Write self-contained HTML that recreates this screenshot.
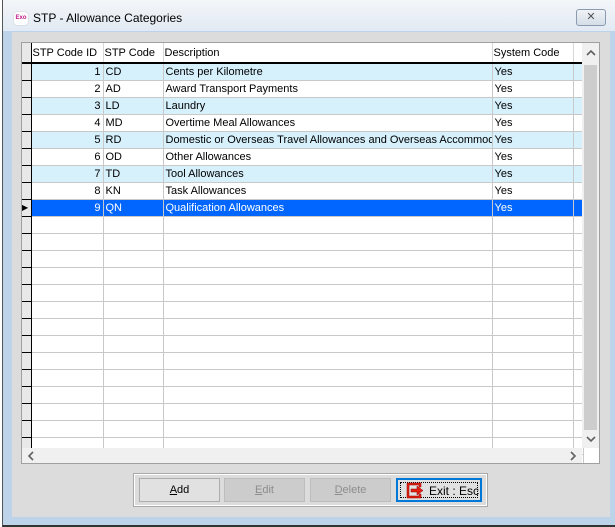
<!DOCTYPE html>
<html><head><style>
*{margin:0;padding:0;box-sizing:border-box}
body{width:615px;height:527px;overflow:hidden;background:#fff;font-family:"Liberation Sans",Arial,sans-serif;font-size:11px;position:relative}
.abs{position:absolute}
.win{left:2px;top:0;width:613px;height:527px;border-left:1px solid #555;border-bottom:2px solid #333;background:linear-gradient(#f4f6f9,#dfe8f2 35px);}
.frame{left:3px;top:31px;width:612px;height:494px;background:#bcd3ea}
.client{left:12px;top:32px;width:598px;height:485px;background:#dcdcdc}
.grid{left:21px;top:42px;width:579px;height:422px;background:#fff;border:1px solid #a0a0a0;overflow:hidden}
table{border-collapse:collapse;position:absolute;left:0;top:0;table-layout:fixed}
td{height:17px;border-right:1px solid #c8c8c8;border-bottom:1px solid #c8c8c8;padding:0 2px;white-space:nowrap;overflow:hidden;font-size:11px}
tr.h td{height:20px;border-bottom:2px solid #000;border-right:1px solid #d8d8d8;padding:0 1px}
tr.b td{background:#d6f0fc}
tr.s td{background:#0066ff;color:#fff}
tr td.ind{background:#e8e8e8;border-right:1px solid #000;border-bottom:1px solid #000;padding:0}
.r{text-align:right}
.btn{top:478px;height:24px;border:1px solid #adadad;background:#e1e1e1;text-align:center;line-height:22px;font-size:11px;white-space:nowrap}
.dis{background:#cccccc;border-color:#bdbdbd;color:#8d8d8d}
</style></head><body>
<div class="abs win"></div>
<div class="abs frame"></div>
<div class="abs client"></div>
<div class="abs" style="left:14px;top:12px;width:14px;height:13px;background:#fff;border-radius:3px;font-size:6px;color:#c0188a;font-weight:bold;line-height:13px;text-align:center;box-shadow:0 0 1px #999">Exo</div>
<div class="abs" style="left:33px;top:11px;font-size:12px;color:#000">STP - Allowance Categories</div>
<div class="abs" style="left:576px;top:9px;width:30px;height:17px;border:1px solid #8a9bb0;border-radius:3px;background:linear-gradient(#f0f3f7,#d4dde8);text-align:center;font-size:11px;line-height:15px;color:#555">✕</div>
<div class="abs grid">
<table style="width:561px">
<colgroup><col style="width:9px"><col style="width:72px"><col style="width:60px"><col style="width:329px"><col style="width:81px"><col style="width:10px"></colgroup>
<tr class="h"><td class="ind" style="border-bottom:2px solid #000"></td><td>STP Code ID</td><td>STP Code</td><td>Description</td><td>System Code</td><td></td></tr>
<tr class="b"><td class="ind"></td><td class="r">1</td><td>CD</td><td>Cents per Kilometre</td><td>Yes</td><td></td></tr>
<tr><td class="ind"></td><td class="r">2</td><td>AD</td><td>Award Transport Payments</td><td>Yes</td><td></td></tr>
<tr class="b"><td class="ind"></td><td class="r">3</td><td>LD</td><td>Laundry</td><td>Yes</td><td></td></tr>
<tr><td class="ind"></td><td class="r">4</td><td>MD</td><td>Overtime Meal Allowances</td><td>Yes</td><td></td></tr>
<tr class="b"><td class="ind"></td><td class="r">5</td><td>RD</td><td>Domestic or Overseas Travel Allowances and Overseas Accommodation</td><td>Yes</td><td></td></tr>
<tr><td class="ind"></td><td class="r">6</td><td>OD</td><td>Other Allowances</td><td>Yes</td><td></td></tr>
<tr class="b"><td class="ind"></td><td class="r">7</td><td>TD</td><td>Tool Allowances</td><td>Yes</td><td></td></tr>
<tr><td class="ind"></td><td class="r">8</td><td>KN</td><td>Task Allowances</td><td>Yes</td><td></td></tr>
<tr class="s"><td class="ind" style="font-size:8px;line-height:8px;color:#000">&#9654;</td><td class="r">9</td><td>QN</td><td>Qualification Allowances</td><td>Yes</td><td></td></tr>
<tr><td class="ind"></td><td></td><td></td><td></td><td></td><td></td></tr>
<tr><td class="ind"></td><td></td><td></td><td></td><td></td><td></td></tr>
<tr><td class="ind"></td><td></td><td></td><td></td><td></td><td></td></tr>
<tr><td class="ind"></td><td></td><td></td><td></td><td></td><td></td></tr>
<tr><td class="ind"></td><td></td><td></td><td></td><td></td><td></td></tr>
<tr><td class="ind"></td><td></td><td></td><td></td><td></td><td></td></tr>
<tr><td class="ind"></td><td></td><td></td><td></td><td></td><td></td></tr>
<tr><td class="ind"></td><td></td><td></td><td></td><td></td><td></td></tr>
<tr><td class="ind"></td><td></td><td></td><td></td><td></td><td></td></tr>
<tr><td class="ind"></td><td></td><td></td><td></td><td></td><td></td></tr>
<tr><td class="ind"></td><td></td><td></td><td></td><td></td><td></td></tr>
<tr><td class="ind"></td><td></td><td></td><td></td><td></td><td></td></tr>
<tr><td class="ind"></td><td></td><td></td><td></td><td></td><td></td></tr>
<tr><td class="ind"></td><td></td><td></td><td></td><td></td><td></td></tr>
<tr><td class="ind"></td><td></td><td></td><td></td><td></td><td></td></tr>
<tr><td class="ind"></td><td></td><td></td><td></td><td></td><td></td></tr>
<tr><td class="ind"></td><td></td><td></td><td></td><td></td><td></td></tr>
<tr><td class="ind"></td><td></td><td></td><td></td><td></td><td></td></tr>
</table>
<div class="abs" style="left:560px;top:0;width:17px;height:405px;background:#f0f0f0"></div>
<div class="abs" style="left:562px;top:22px;width:13px;height:365px;background:#cdcdcd"></div>
<svg class="abs" style="left:564px;top:6px" width="10" height="8"><path d="M1 6L5 2L9 6" fill="none" stroke="#606060" stroke-width="1.6"/></svg>
<svg class="abs" style="left:564px;top:392px" width="10" height="8"><path d="M1 2L5 6L9 2" fill="none" stroke="#606060" stroke-width="1.6"/></svg>
<div class="abs" style="left:0;top:405px;width:560px;height:15px;background:#f0f0f0"></div>
<svg class="abs" style="left:5px;top:408px" width="8" height="10"><path d="M6 1L2 5L6 9" fill="none" stroke="#606060" stroke-width="1.6"/></svg>
<svg class="abs" style="left:547px;top:408px" width="8" height="10"><path d="M2 1L6 5L2 9" fill="none" stroke="#606060" stroke-width="1.6"/></svg>
</div>
<div class="abs" style="left:133px;top:473px;width:355px;height:34px;border:1px solid #a9a9a9;box-shadow:inset 0 0 0 1px #fff;background:#dcdcdc"></div>
<div class="abs btn" style="left:139px;width:81px"><u>A</u>dd</div>
<div class="abs btn dis" style="left:224px;width:81px"><u>E</u>dit</div>
<div class="abs btn dis" style="left:310px;width:81px"><u>D</u>elete</div>
<div class="abs btn" style="left:396px;width:86px;border:2px solid #0078d7;line-height:20px"><div class="abs" style="left:2px;top:2px;right:2px;bottom:2px;border:1px dotted #000"></div>
<svg class="abs" style="left:8px;top:2px" width="20" height="17"><path d="M1 1h14v4h-2V3H3v11h10v-2h2v4H1z" fill="#e02010" stroke="#900" stroke-width=".5"/><path d="M5 7h6V4l6 4.5-6 4.5V10H5z" fill="#e02010" stroke="#900" stroke-width=".5"/></svg>
<span style="position:absolute;left:31px;top:1px;font-size:12px;white-space:nowrap">Exit : Esc</span></div>
</body></html>
